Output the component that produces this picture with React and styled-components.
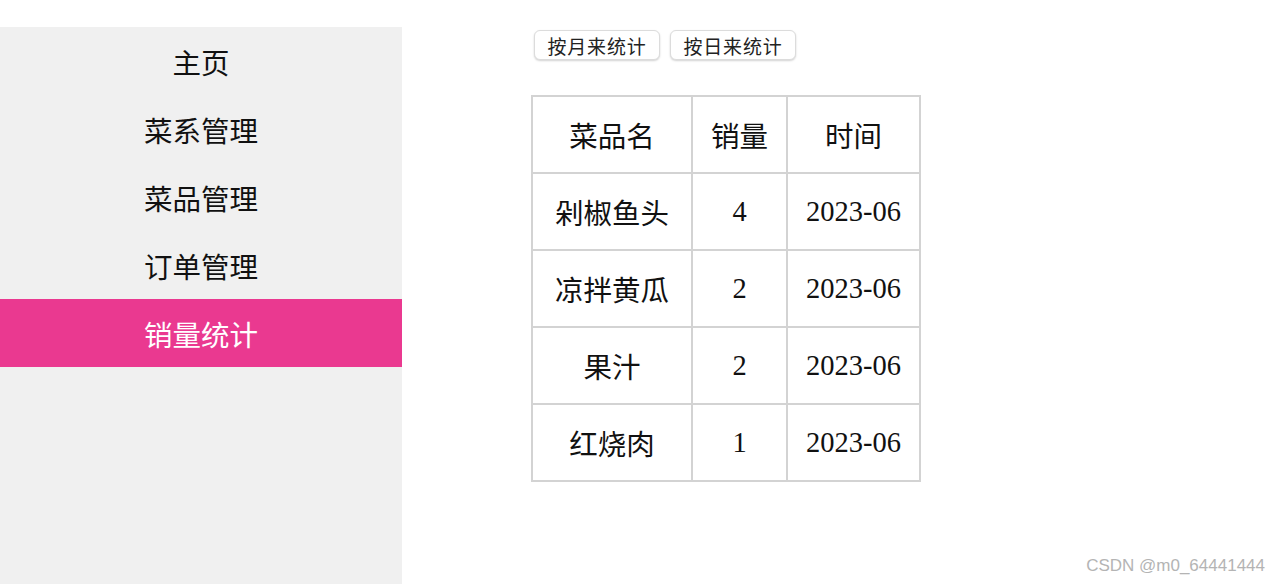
import React from "react";
import styled, { createGlobalStyle } from "styled-components";

const Global = createGlobalStyle`
  html, body { margin: 0; padding: 0; background: #fff; }
  body { font-family: "Liberation Serif", "Noto Sans CJK SC", serif; }
`;

const Page = styled.div`
  display: flex;
  align-items: flex-start;
  height: 584px;
  padding-top: 27px;
  box-sizing: border-box;
  position: relative;
  overflow: hidden;
`;

const Sidebar = styled.nav`
  width: 402px;
  height: 557px;
  background: #f0f0f0;
  display: flex;
  flex-direction: column;
  flex-shrink: 0;
`;

const NavItem = styled.div`
  height: 68px;
  display: flex;
  align-items: center;
  justify-content: center;
  font-family: "Liberation Serif", "Noto Sans CJK SC", serif;
  font-size: 28.5px;
  color: ${(p) => (p.$active ? "#ffffff" : "#111111")};
  background: ${(p) => (p.$active ? "#ea3990" : "transparent")};
`;

const Main = styled.main`
  margin-left: 130px;
  display: flex;
  flex-direction: column;
`;

const Toolbar = styled.div`
  display: flex;
  gap: 10px;
  margin-left: 2px;
  margin-top: 3px;
`;

const Button = styled.button`
  height: 30px;
  width: 126px;
  padding: 0;
  border: 1px solid #dcdcdc;
  border-radius: 6px;
  background: #ffffff;
  box-shadow: 0 1px 2px rgba(0, 0, 0, 0.18);
  font-family: "Noto Sans CJK SC", sans-serif;
  font-size: 19px;
  color: #222;
  letter-spacing: 0.8px;
  display: flex;
  align-items: center;
  justify-content: center;
`;

const Table = styled.table`
  margin-top: 35px;
  margin-left: -1px;
  border-collapse: collapse;
  border: 2px solid #d3d3d3;
`;

const Cell = styled.td`
  border: 2px solid #d3d3d3;
  height: 75px;
  padding: 0;
  text-align: center;
  font-family: "Liberation Serif", "Noto Sans CJK SC", serif;
  font-size: 28.5px;
  color: #111;
  width: ${(p) => p.$w}px;
`;

const HeadCell = styled(Cell).attrs({ as: "th" })`
  font-weight: normal;
`;

const Watermark = styled.div`
  position: absolute;
  right: 15px;
  bottom: 8px;
  font-family: "Liberation Sans", "Noto Sans", sans-serif;
  font-size: 17px;
  color: #b4b4b4;
`;

const navItems = ["主页", "菜系管理", "菜品管理", "订单管理", "销量统计"];
const rows = [
  ["剁椒鱼头", "4", "2023-06"],
  ["凉拌黄瓜", "2", "2023-06"],
  ["果汁", "2", "2023-06"],
  ["红烧肉", "1", "2023-06"],
];
const widths = [158, 93, 131];

export default function App() {
  return (
    <>
      <Global />
      <Page>
        <Sidebar>
          {navItems.map((n, i) => (
            <NavItem key={n} $active={i === 4}>
              {n}
            </NavItem>
          ))}
        </Sidebar>
        <Main>
          <Toolbar>
            <Button>按月来统计</Button>
            <Button>按日来统计</Button>
          </Toolbar>
          <Table>
            <thead>
              <tr>
                {["菜品名", "销量", "时间"].map((h, i) => (
                  <HeadCell key={h} $w={widths[i]}>
                    {h}
                  </HeadCell>
                ))}
              </tr>
            </thead>
            <tbody>
              {rows.map((r) => (
                <tr key={r[0]}>
                  {r.map((c, i) => (
                    <Cell key={i} $w={widths[i]}>
                      {c}
                    </Cell>
                  ))}
                </tr>
              ))}
            </tbody>
          </Table>
        </Main>
        <Watermark>CSDN @m0_64441444</Watermark>
      </Page>
    </>
  );
}
